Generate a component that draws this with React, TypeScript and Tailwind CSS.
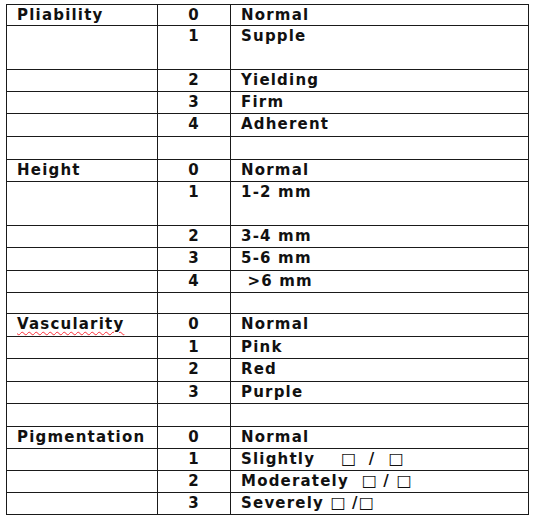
interface Row {
  label?: string;
  score?: string;
  text?: string;
  h: number;
  wavy?: boolean;
}

const rows: Row[] = [
  { label: "Pliability", score: "0", text: "Normal", h: 21 },
  { score: "1", text: "Supple", h: 44 },
  { score: "2", text: "Yielding", h: 22 },
  { score: "3", text: "Firm", h: 22 },
  { score: "4", text: "Adherent", h: 23 },
  { h: 23 },
  { label: "Height", score: "0", text: "Normal", h: 22 },
  { score: "1", text: "1-2 mm", h: 44 },
  { score: "2", text: "3-4 mm", h: 22 },
  { score: "3", text: "5-6 mm", h: 23 },
  { score: "4", text: " >6 mm", h: 22 },
  { h: 21 },
  { label: "Vascularity", score: "0", text: "Normal", h: 23, wavy: true },
  { score: "1", text: "Pink", h: 22 },
  { score: "2", text: "Red", h: 23 },
  { score: "3", text: "Purple", h: 22 },
  { h: 23 },
  { label: "Pigmentation", score: "0", text: "Normal", h: 22 },
  { score: "1", text: "Slightly    ☐  /  ☐", h: 22 },
  { score: "2", text: "Moderately  ☐ / ☐", h: 22 },
  { score: "3", text: "Severely ☐ /☐", h: 22 },
];

// render ☐ markers as thin squares
function Cell({ text }: { text: string }) {
  const parts = text.split("☐");
  return (
    <>
      {parts.map((p, i) => (
        <span key={i}>
          {p}
          {i < parts.length - 1 && (
            <span className="text-[16px] font-normal tracking-normal">{"\u25A1"}</span>
          )}
        </span>
      ))}
    </>
  );
}

export default function App() {
  return (
    <div className="w-[533px] h-[515px] bg-white pl-[6px] pt-[4px]">
      <div
        className="w-[523px] border-l border-t border-[#1a1a1a] text-[15px] leading-[18px] font-bold tracking-[1.2px] text-[#111]"
        style={{ fontFamily: '"DejaVu Sans", Verdana, sans-serif' }}
      >
        {rows.map((r, i) => (
          <div key={i} className="flex" style={{ height: r.h }}>
            <div className="w-[151px] border-r border-b border-[#1a1a1a] pl-[10px] pt-[1px]">
              {r.label && (
                <span
                  className={
                    r.wavy
                      ? "underline decoration-wavy decoration-red-500 decoration-1 underline-offset-2"
                      : ""
                  }
                >
                  {r.label}
                </span>
              )}
            </div>
            <div className="w-[73px] border-r border-b border-[#1a1a1a] pt-[1px] text-center">
              {r.score}
            </div>
            <div className="flex-1 border-r border-b border-[#1a1a1a] pl-[10px] pt-[1px] whitespace-pre">
              {r.text && <Cell text={r.text} />}
            </div>
          </div>
        ))}
      </div>
    </div>
  );
}
